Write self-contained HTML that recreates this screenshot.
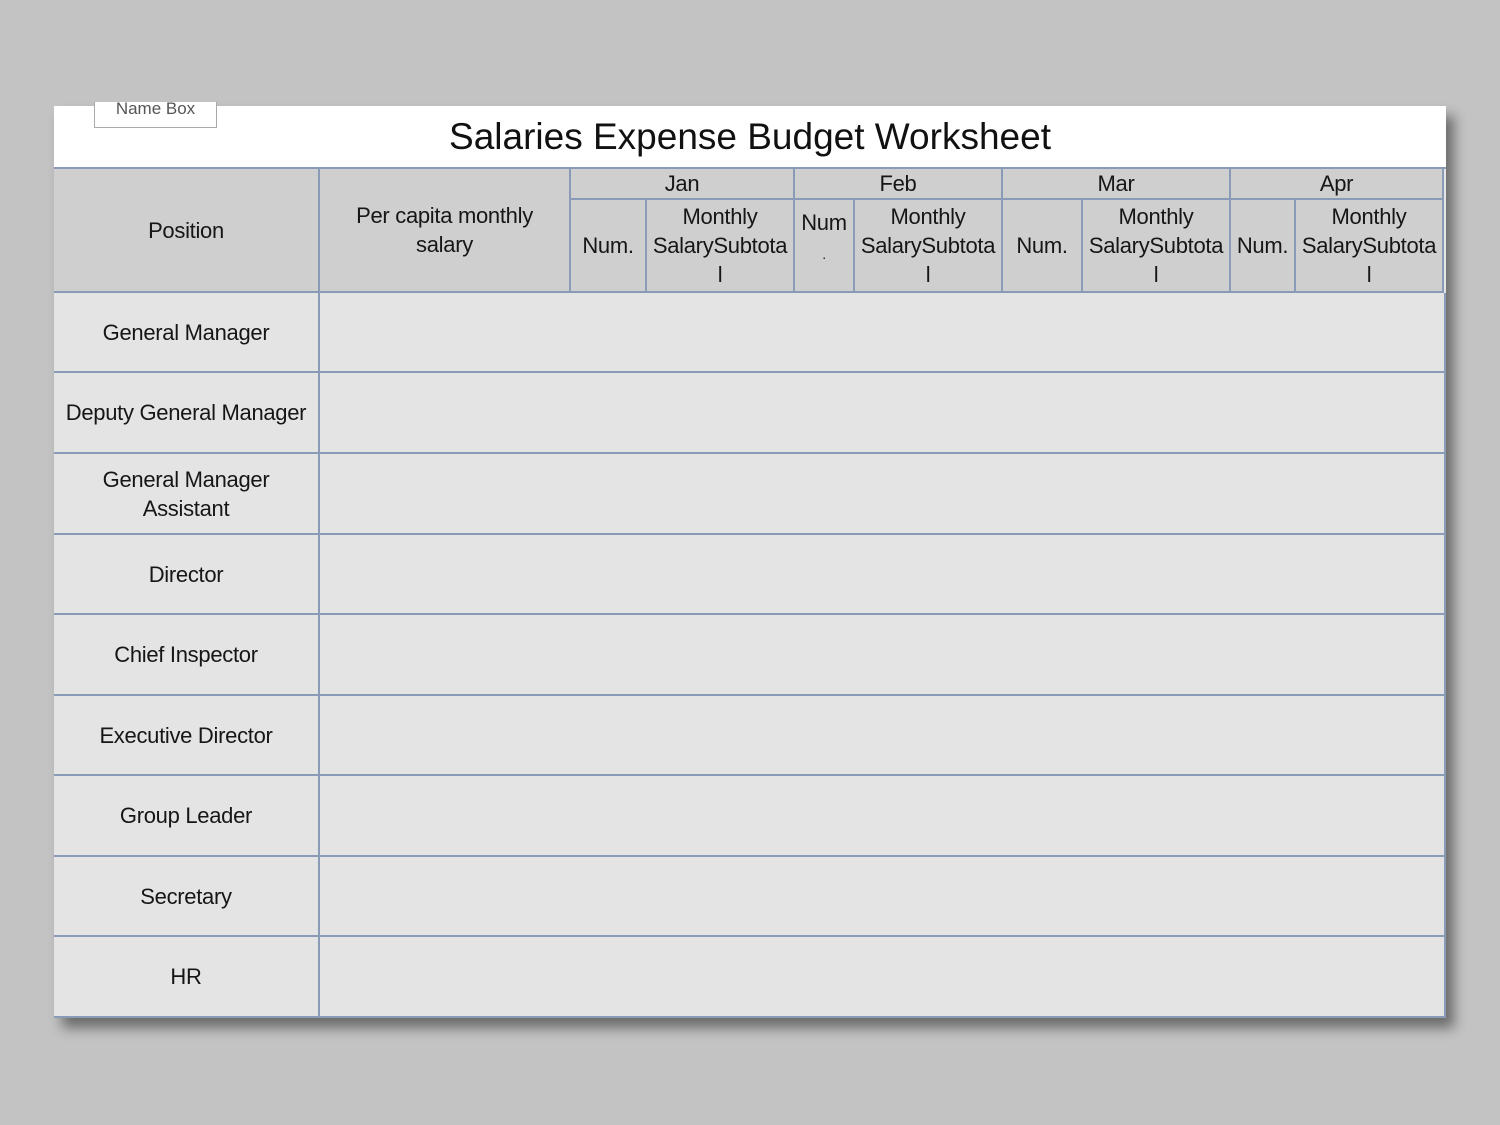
<!DOCTYPE html>
<html><head><meta charset="utf-8"><style>
*{margin:0;padding:0;box-sizing:border-box}
body{width:1500px;height:1125px;background:#c3c3c3;position:relative;overflow:hidden;font-family:"Liberation Sans",Arial,sans-serif;color:#161616}
#sheet{position:absolute;left:54px;top:106px;width:1392px;height:912px;background:#fff;box-shadow:8px 10px 12px rgba(0,0,0,.45)}
.c{position:absolute;display:flex;align-items:center;justify-content:center;text-align:center;font-size:22px;line-height:29px;border-right:2px solid #8a9bb8;border-bottom:2px solid #8a9bb8;letter-spacing:-0.3px}
.h{background:#d0cfd0}
.b{background:#e4e4e4}
#nb{position:absolute;left:40px;top:-4px;width:123px;height:26px;border:1.5px solid #aaa;border-top:none;background:#fff;font-size:17px;color:#555;text-align:center;line-height:14px;overflow:hidden}
#title{position:absolute;left:0;width:1392px;top:10px;text-align:center;font-size:37px;color:#111}
#topline{position:absolute;left:0;top:61px;width:1392px;height:2px;background:#8a9bb8}
</style></head><body>
<div id="sheet">
<div id="nb">Name Box</div>
<div id="title">Salaries Expense Budget Worksheet</div>
<div id="topline"></div>
</div>
<div id="g"></div>
<script>
var html='';
function cell(x1,y1,x2,y2,cls,t){html+='<div class="c '+cls+'" style="left:'+x1+'px;top:'+y1+'px;width:'+(x2-x1)+'px;height:'+(y2-y1)+'px">'+t+'</div>';}
cell(54,169,320,293,'h','Position');
cell(320,169,571,293,'h','<div>Per capita monthly<br>salary</div>');
var m=[[571,647,795,'Jan'],[795,855,1003,'Feb'],[1003,1083,1231,'Mar'],[1231,1296,1444,'Apr']];
m.forEach(function(a,i){
cell(a[0],169,a[2],200,'h',a[3]);
cell(a[0],200,a[1],293,'h',i==1?'<div style="margin-top:-14px">Num<br><span style="font-size:14px">.</span></div>':'Num.');
cell(a[1],200,a[2],293,'h','<div>Monthly<br>SalarySubtota<br>l</div>');
});
html+='<div style="position:absolute;left:1444px;top:169px;width:2px;height:124px;background:#e4e4e4"></div>';
var r=['General Manager','Deputy General Manager','General Manager<br>Assistant','Director','Chief Inspector','Executive Director','Group Leader','Secretary','HR'];
var ys=[293,373,454,535,615,696,776,857,937,1018];
r.forEach(function(t,i){cell(54,ys[i],320,ys[i+1],'b',t);cell(320,ys[i],1446,ys[i+1],'b','');});
document.getElementById('g').innerHTML=html;
</script>
</body></html>
